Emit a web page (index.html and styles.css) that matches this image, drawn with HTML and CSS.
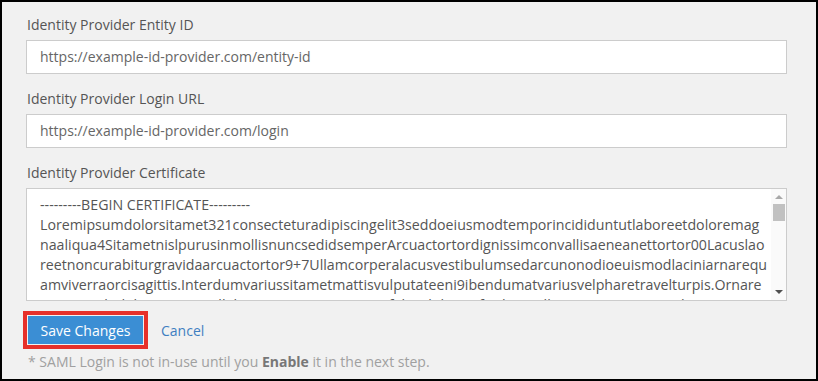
FILE: index.html
```html
<!DOCTYPE html>
<html>
  <head>
    <meta charset="UTF-8"/>
    <link rel="stylesheet" href="styles.css">
  </head>
  <body>
    <div id="frame">
      <div class="field">
        <label>Identity Provider Entity ID</label>
        <div class="input">https://example-id-provider.com/entity-id</div>
      </div>
      <div class="field">
        <label>Identity Provider Login URL</label>
        <div class="input">https://example-id-provider.com/login</div>
      </div>
      <div class="field">
        <label>Identity Provider Certificate</label>
        <div class="cert">
          <div class="cert-text">
            <span>---------BEGIN CERTIFICATE---------</span>
            <span>Loremipsumdolorsitamet321consecteturadipiscingelit3seddoeiusmodtemporincididuntutlaboreetdoloremag</span>
            <span>naaliqua4SitametnislpurusinmollisnuncsedidsemperArcuactortordignissimconvallisaeneanettortor00Lacuslao</span>
            <span>reetnoncurabiturgravidaarcuactortor9+7Ullamcorperalacusvestibulumsedarcunonodioeuismodlaciniarnarequ</span>
            <span>amviverraorcisagittis.Interdumvariussitametmattisvulputateeni9ibendumatvariusvelpharetravelturpis.Ornare</span>
            <span>aeneanvelitdolorsitametnullalaoreetsitauctorsemperfelisetlobortisfacilisisnullaminceptosrisusatultrices</span>
          </div>
          <div class="scrollbar">
            <div class="arrow up"></div>
            <div class="thumb"></div>
            <div class="track"></div>
            <div class="arrow down"></div>
          </div>
        </div>
      </div>
      <div class="actions">
        <button class="save">Save Changes</button>
        <a class="cancel">Cancel</a>
      </div>
      <div class="note">* SAML Login is not in-use until you <b>Enable</b> it in the next step.</div>
    </div>
  </body>
</html>
```

FILE: styles.css
```css
body
{
  margin: 0;
  padding: 0;
  font-family: "Open Sans", sans-serif;
  font-size: 14px;
}
#frame
{
  box-sizing: border-box;
  width: 818px;
  height: 381px;
  border: 2px solid #000;
  background: #f1f1f1;
  padding: 13px 29px 0 24px;
}
.field
{
  margin-bottom: 15px;
}
.field > label
{
  display: block;
  line-height: 20px;
  margin-bottom: 5px;
  padding-left: 1px;
  color: #555;
}
.input
{
  box-sizing: border-box;
  height: 34px;
  line-height: 32px;
  padding: 0 13px;
  background: #fff;
  border: 1px solid #ccc;
  color: #666;
}
.cert
{
  box-sizing: border-box;
  display: flex;
  height: 113px;
  background: #fff;
  border: 1px solid #ccc;
  overflow: hidden;
}
.cert-text
{
  flex: 1;
  padding: 6px 0 0 13px;
  color: #555;
  font-size: 14.2px;
  line-height: 20px;
  overflow: hidden;
}
.cert-text > span
{
  display: block;
  white-space: nowrap;
}
.scrollbar
{
  width: 15px;
  display: flex;
  flex-direction: column;
  align-items: center;
  background: #fafafa;
}
.arrow
{
  width: 0;
  height: 0;
  border-left: 4px solid transparent;
  border-right: 4px solid transparent;
}
.arrow.up
{
  margin-top: 6px;
  border-bottom: 4px solid #a8a8a8;
}
.arrow.down
{
  margin-bottom: 6px;
  border-top: 4px solid #505050;
}
.thumb
{
  width: 12px;
  height: 17px;
  margin-top: 5px;
  background: #c1c1c1;
}
.track
{
  flex: 1;
}
.actions
{
  display: flex;
  align-items: center;
  margin-top: 4px;
  padding-left: 2px;
}
.save
{
  width: 115px;
  height: 28px;
  padding: 0;
  border: 0;
  background: #3b8ed4;
  color: #fff;
  font-family: inherit;
  font-size: 14px;
  outline: 4px solid #e7302a;
  outline-offset: 1px;
}
.cancel
{
  margin-left: 18px;
  color: #3f7fc1;
}
.note
{
  margin-top: 8px;
  line-height: 20px;
  padding-left: 2px;
  color: #a0a0a0;
}
.note b
{
  color: #777;
}
```
